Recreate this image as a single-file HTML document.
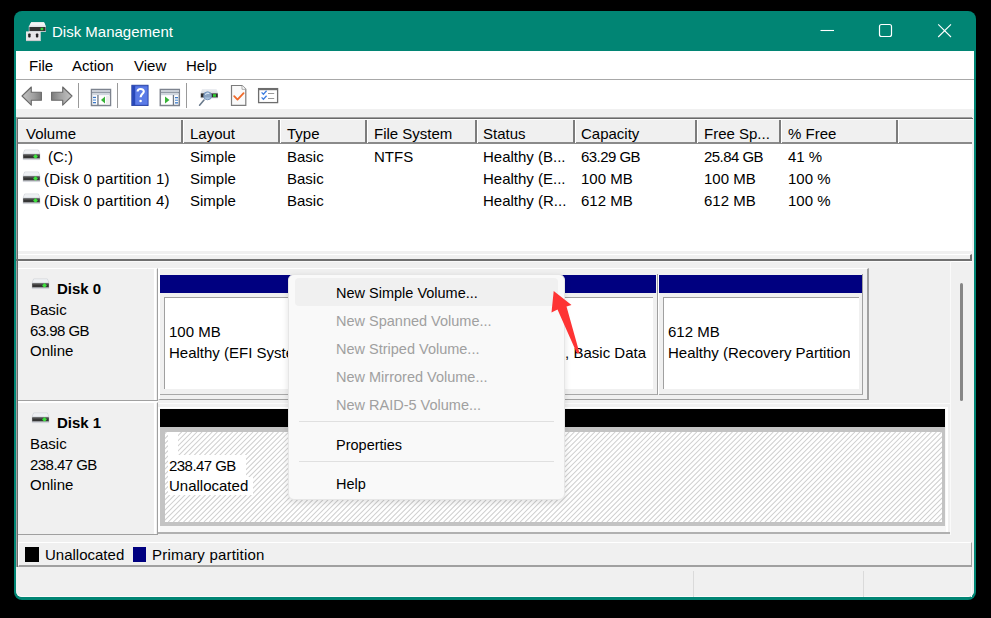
<!DOCTYPE html>
<html><head><meta charset="utf-8">
<style>
*{margin:0;padding:0;box-sizing:border-box}
html,body{width:991px;height:618px;background:#000;overflow:hidden}
body{position:relative;font-family:"Liberation Sans",sans-serif;font-size:15px;color:#000}
.a{position:absolute}
.t{position:absolute;white-space:nowrap;line-height:18px}
#win{left:14px;top:11px;width:962px;height:589px;background:#018574;border-radius:8px;overflow:hidden}
#inner{left:16px;top:51px;width:958px;height:546px;background:#f0f0f0;border-radius:0 0 6px 6px;box-shadow:inset 0 -1px 0 #fbfbfb}
.hatch{background:repeating-linear-gradient(-45deg,#fff 0,#fff 2.2px,#c0c0c0 2.2px,#c0c0c0 3.67px)}
</style></head>
<body>

<svg width="0" height="0" style="position:absolute"><defs>
<linearGradient id="silv" x1="0" y1="0" x2="0" y2="1"><stop offset="0" stop-color="#eceef2"/><stop offset="1" stop-color="#c9ccd2"/></linearGradient>
<linearGradient id="arrg" x1="0" y1="0" x2="1" y2="0"><stop offset="0" stop-color="#c4c4c4"/><stop offset="0.6" stop-color="#a0a0a0"/><stop offset="1" stop-color="#7c7c7c"/></linearGradient><linearGradient id="arrg2" x1="1" y1="0" x2="0" y2="0"><stop offset="0" stop-color="#c4c4c4"/><stop offset="0.6" stop-color="#a0a0a0"/><stop offset="1" stop-color="#7c7c7c"/></linearGradient>
<symbol id="drv" viewBox="0 0 20 14">
<path d="M2.6 1 H16.4 L17.8 5 V10.6 H1.2 V5 Z" fill="#dfe2e7" stroke="#c3c7ce" stroke-width="0.6"/>
<path d="M2.8 1.3 H16.2 L17.2 4 H1.8 Z" fill="#eef0f3"/>
<rect x="1.2" y="5.4" width="16.6" height="4.2" fill="#353535"/>
<rect x="1.6" y="5.7" width="15.8" height="0.9" fill="#5a5a5a"/>
<path d="M13.5 5 L14.7 6.3 L15.9 7.5 L14.7 8.8 L13.5 9.9 L12.3 8.8 L11.1 7.5 L12.3 6.3 Z" fill="#3ce03c"/>
<rect x="1.2" y="9.6" width="16.6" height="1" fill="#cfd3d9"/>
</symbol>
</defs></svg>
<div id="win" class="a"></div>
<div id="inner" class="a"></div>

<!-- title icon -->
<svg class="a" style="left:24px;top:20px" width="24" height="24" viewBox="0 0 24 24">
<path d="M7.2 2.3 H20 L22 6.5 V11.5 H4.8 V6.5 Z" fill="#e3e4e8"/>
<path d="M7.2 2.3 H20 L21.5 5.5 H5.5 Z" fill="#f4f4f6"/>
<rect x="5.4" y="7" width="16.2" height="4.2" fill="#333"/>
<rect x="16.6" y="7.8" width="2.6" height="2.4" fill="#35d035"/>
<rect x="4.8" y="11.2" width="17" height="0.8" fill="#cfd3d8"/>
<rect x="2" y="11.4" width="14.7" height="9.6" fill="#e6e6e8"/>
<rect x="2" y="20.2" width="14.7" height="0.9" fill="#c4c4c6"/>
<rect x="4.2" y="13.4" width="2.4" height="4.2" rx="0.8" fill="#222"/>
<rect x="11.9" y="13.4" width="2.4" height="4.2" rx="0.8" fill="#222"/>
</svg>
<!-- window buttons -->
<svg class="a" style="left:810px;top:15px" width="160" height="30">
<line x1="820.5" y1="15.5" x2="834" y2="15.5" stroke="#fff" stroke-width="1.1" transform="translate(-810,0)"/>
<rect x="69.5" y="9.5" width="12" height="12" rx="2" fill="none" stroke="#fff" stroke-width="1.2"/>
<path d="M128.2 9.3 L141 22 M141 9.3 L128.2 22" stroke="#fff" stroke-width="1.1"/>
</svg>

<!-- title -->
<div class="t" style="left:52px;top:23px;color:#fff">Disk Management</div>
<!-- menu -->
<div class="a" style="left:16px;top:51px;width:958px;height:28px;background:#fff"></div>
<div class="a" style="left:16px;top:79px;width:958px;height:1px;background:#a8a8a8"></div>
<div class="a" style="left:16px;top:80px;width:958px;height:29px;background:#fff"></div>
<!-- toolbar -->
<svg class="a" style="left:16px;top:80px" width="300" height="29" viewBox="16 80 300 29">
<path d="M22 96 L31.3 87 V92.2 H41.4 V100.2 H31.3 V105.2 Z" fill="url(#arrg)" stroke="#6a6a6a" stroke-width="1.1" stroke-linejoin="round"/>
<path d="M72 96 L62.7 87 V92.2 H51.6 V100.2 H62.7 V105.2 Z" fill="url(#arrg2)" stroke="#6a6a6a" stroke-width="1.1" stroke-linejoin="round"/>
<rect x="78" y="83" width="1" height="25" fill="#9a9a9a"/>
<rect x="117" y="83" width="1" height="25" fill="#9a9a9a"/>
<rect x="186" y="83" width="1" height="25" fill="#9a9a9a"/>
<!-- icon3 -->
<rect x="91.5" y="89.5" width="19" height="16" fill="#fff" stroke="#7d838e" stroke-width="1.5"/>
<rect x="92" y="90" width="18" height="2.3" fill="#c9ced6"/>
<rect x="92" y="92.3" width="18" height="1" fill="#6d7785"/>
<rect x="92" y="93.4" width="18" height="1.8" fill="#cfd6df"/>
<rect x="97.3" y="95" width="1.3" height="10" fill="#6d7785"/>
<rect x="93" y="96.8" width="3" height="1.3" fill="#3a78c8"/>
<rect x="93" y="99.4" width="3" height="1.3" fill="#6aa0dd"/>
<rect x="93" y="102" width="3" height="1.3" fill="#3a78c8"/>
<rect x="106" y="96" width="4" height="8.5" fill="#eee"/>
<path d="M101 100 L105 96.6 V103.4 Z" fill="#37b337"/>
<!-- help book -->
<rect x="131.8" y="85.2" width="16.3" height="20.4" fill="#4666d8" stroke="#203a9a" stroke-width="0.8"/>
<rect x="132.2" y="85.6" width="3" height="19.6" fill="#2848b8"/>
<rect x="135.4" y="86.5" width="12" height="18" fill="#5b7be6"/>
<path d="M137.6 91.4 C137.6 88.4 143.8 88.2 143.8 91.4 C143.8 93.6 140.6 94 140.6 97.2" fill="none" stroke="#fff" stroke-width="2.1"/>
<circle cx="140.6" cy="101" r="1.3" fill="#fff"/>
<!-- icon5 -->
<rect x="160.3" y="89.5" width="19" height="16" fill="#fff" stroke="#7d838e" stroke-width="1.5"/>
<rect x="161" y="90" width="18" height="2.3" fill="#c9ced6"/>
<rect x="161" y="92.3" width="18" height="1" fill="#6d7785"/>
<rect x="161" y="93.4" width="18" height="1.8" fill="#cfd6df"/>
<rect x="172.8" y="95" width="1.3" height="10" fill="#6d7785"/>
<rect x="175" y="97" width="3" height="1.3" fill="#3a78c8"/>
<rect x="175" y="99.6" width="3" height="1.3" fill="#6aa0dd"/>
<rect x="175" y="102.2" width="3" height="1.3" fill="#3a78c8"/>
<path d="M169.5 100 L165 96.6 V103.4 Z" fill="#37b337"/>
<!-- icon7 rescan -->
<path d="M202 89 H216.5 L217.8 92.5 V98 H200.8 V92.5 Z" fill="url(#silv)"/>
<rect x="200.8" y="93.4" width="17" height="4.2" fill="#2e2e2e"/>
<rect x="213" y="94.2" width="3" height="2.6" fill="#30d030"/>
<rect x="200.8" y="97.6" width="17" height="0.8" fill="#d6d9de"/>
<line x1="204" y1="100" x2="199.6" y2="105.2" stroke="#6a7a8c" stroke-width="1.6" stroke-linecap="round"/>
<circle cx="207.6" cy="95.8" r="4" fill="#9ab8dc" fill-opacity="0.85" stroke="#7090b8" stroke-width="0.9"/>
<path d="M205.2 94.6 Q207 92.8 209.2 93.4" stroke="#e8f0fa" stroke-width="0.9" fill="none"/>
<!-- icon8 document check -->
<path d="M231.5 85.5 H242 L245.8 89.3 V105.3 H231.5 Z" fill="#fafafa" stroke="#7c7c7c" stroke-width="1.2"/>
<path d="M242 85.5 V89.3 H245.8" fill="#fff" stroke="#9a9a9a" stroke-width="0.8"/>
<path d="M234.2 96.2 L237.5 99.6 L243.6 93.2" fill="none" stroke="#f06a2a" stroke-width="1.8" stroke-linecap="round" stroke-linejoin="round"/>
<!-- icon9 checklist -->
<rect x="258.6" y="88.6" width="19" height="14" fill="#fff" stroke="#6e6e6e" stroke-width="1.3"/>
<rect x="258.6" y="88.4" width="19" height="1.8" fill="#6e6e6e"/>
<path d="M261.6 92.4 L263.4 94.2 L266.6 90.8" fill="none" stroke="#3f7fe0" stroke-width="1.3"/>
<path d="M261.6 97.4 L263.4 99.2 L266.6 95.8" fill="none" stroke="#3f7fe0" stroke-width="1.3"/>
<rect x="268" y="93" width="6.2" height="1" fill="#9a9a9a"/>
<rect x="268" y="98" width="6.2" height="1" fill="#9a9a9a"/>
</svg>
<div class="t" style="left:29px;top:57px">File</div>
<div class="t" style="left:72px;top:57px">Action</div>
<div class="t" style="left:134px;top:57px">View</div>
<div class="t" style="left:186px;top:57px">Help</div>

<!-- list view -->
<div class="a" style="left:16px;top:117px;width:956px;height:145px;background:#fff;border-top:1px solid #a0a0a0;border-left:1px solid #a0a0a0"></div>
<div class="a" style="left:17px;top:118px;width:956px;height:1px;background:#696969"></div>
<div class="a" style="left:17px;top:118px;width:1px;height:143px;background:#696969"></div>
<!-- header -->
<div class="a" style="left:18px;top:119px;width:954px;height:25px;background:#f0f0f0;border-top:1px solid #fdfdfd"></div>
<div class="a" style="left:18px;top:142px;width:954px;height:2px;background:#8a8a8a"></div>
<div class="a" style="left:181px;top:120px;width:2px;height:23px;background:#7c7c7c"></div>
<div class="a" style="left:183px;top:120px;width:1px;height:23px;background:#fff"></div>
<div class="a" style="left:278px;top:120px;width:2px;height:23px;background:#7c7c7c"></div>
<div class="a" style="left:280px;top:120px;width:1px;height:23px;background:#fff"></div>
<div class="a" style="left:365px;top:120px;width:2px;height:23px;background:#7c7c7c"></div>
<div class="a" style="left:367px;top:120px;width:1px;height:23px;background:#fff"></div>
<div class="a" style="left:475px;top:120px;width:2px;height:23px;background:#7c7c7c"></div>
<div class="a" style="left:477px;top:120px;width:1px;height:23px;background:#fff"></div>
<div class="a" style="left:573px;top:120px;width:2px;height:23px;background:#7c7c7c"></div>
<div class="a" style="left:575px;top:120px;width:1px;height:23px;background:#fff"></div>
<div class="a" style="left:695px;top:120px;width:2px;height:23px;background:#7c7c7c"></div>
<div class="a" style="left:697px;top:120px;width:1px;height:23px;background:#fff"></div>
<div class="a" style="left:779px;top:120px;width:2px;height:23px;background:#7c7c7c"></div>
<div class="a" style="left:781px;top:120px;width:1px;height:23px;background:#fff"></div>
<div class="a" style="left:896px;top:120px;width:2px;height:23px;background:#7c7c7c"></div>
<div class="a" style="left:898px;top:120px;width:1px;height:23px;background:#fff"></div>

<div class="t" style="left:26px;top:125px">Volume</div>
<div class="t" style="left:190px;top:125px">Layout</div>
<div class="t" style="left:287px;top:125px">Type</div>
<div class="t" style="left:374px;top:125px">File System</div>
<div class="t" style="left:483px;top:125px">Status</div>
<div class="t" style="left:581px;top:125px">Capacity</div>
<div class="t" style="left:704px;top:125px">Free Sp...</div>
<div class="t" style="left:788px;top:125px">% Free</div>
<svg class="a" style="left:22px;top:149px" width="20" height="14"><use href="#drv"/></svg>
<div class="t" style="left:48px;top:148px">(C:)</div>
<div class="t" style="left:190px;top:148px">Simple</div>
<div class="t" style="left:287px;top:148px">Basic</div>
<div class="t" style="left:374px;top:148px">NTFS</div>
<div class="t" style="left:483px;top:148px">Healthy (B...</div>
<div class="t" style="left:581px;top:148px;letter-spacing:-0.55px">63.29 GB</div>
<div class="t" style="left:704px;top:148px;letter-spacing:-0.55px">25.84 GB</div>
<div class="t" style="left:788px;top:148px">41 %</div>
<svg class="a" style="left:22px;top:171px" width="20" height="14"><use href="#drv"/></svg>
<div class="t" style="left:44px;top:170px;letter-spacing:0.2px">(Disk 0 partition 1)</div>
<div class="t" style="left:190px;top:170px">Simple</div>
<div class="t" style="left:287px;top:170px">Basic</div>
<div class="t" style="left:483px;top:170px">Healthy (E...</div>
<div class="t" style="left:581px;top:170px">100 MB</div>
<div class="t" style="left:704px;top:170px">100 MB</div>
<div class="t" style="left:788px;top:170px">100 %</div>
<svg class="a" style="left:22px;top:193px" width="20" height="14"><use href="#drv"/></svg>
<div class="t" style="left:44px;top:192px;letter-spacing:0.2px">(Disk 0 partition 4)</div>
<div class="t" style="left:190px;top:192px">Simple</div>
<div class="t" style="left:287px;top:192px">Basic</div>
<div class="t" style="left:483px;top:192px">Healthy (R...</div>
<div class="t" style="left:581px;top:192px">612 MB</div>
<div class="t" style="left:704px;top:192px">612 MB</div>
<div class="t" style="left:788px;top:192px">100 %</div>

<!-- bottom strip of list -->
<div class="a" style="left:18px;top:251px;width:954px;height:8px;background:#f0f0f0"></div><div class="a" style="left:18px;top:254px;width:954px;height:7px;border-top:1px solid #fff;border-right:2px solid #6e6e6e;border-bottom:2px solid #6e6e6e"></div>
<div class="a" style="left:16px;top:259px;width:956px;height:2px;background:#707070"></div><div class="a" style="left:18px;top:261px;width:932px;height:1px;background:#fafafa"></div>

<!-- graphical view -->
<div class="a" style="left:16px;top:261px;width:2px;height:274px;background:#a0a0a0"></div>
<div class="a" style="left:17px;top:261px;width:1px;height:274px;background:#696969"></div>
<div class="a" style="left:950px;top:261px;width:1px;height:274px;background:#fafafa"></div>
<div class="a thumb" style="left:960px;top:283px;width:3px;height:118px;background:#868686;border-radius:2px"></div>

<!-- disk0 label -->
<div class="a" style="left:18px;top:268px;width:140px;height:133px;border-top:1px solid #fff;border-right:1px solid #a0a0a0;border-bottom:1px solid #a0a0a0"></div>
<div class="a" style="left:154px;top:268px;width:2px;height:132px;background:#fff"></div>
<div class="a" style="left:18px;top:401px;width:140px;height:1px;background:#fff"></div>
<svg class="a" style="left:31px;top:278px" width="20" height="14"><use href="#drv"/></svg>
<div class="t" style="left:57px;top:280px;font-weight:bold">Disk 0</div>
<div class="t" style="left:30px;top:301px">Basic</div>
<div class="t" style="left:30px;top:322px;letter-spacing:-0.55px">63.98 GB</div>
<div class="t" style="left:30px;top:342px">Online</div>

<!-- disk0 partitions container -->
<div class="a" style="left:158px;top:268px;width:711px;height:132px;border-top:1px solid #fff;border-left:2px solid #fff;border-right:2px solid #a0a0a0;border-bottom:1px solid #a0a0a0"></div>
<div class="a" style="left:160px;top:275px;width:203px;height:18px;background:#000080"></div>
<div class="a" style="left:364px;top:274px;width:1px;height:121px;background:#a0a0a0"></div>
<div class="a" style="left:160px;top:394px;width:204px;height:1px;background:#a8a8a8"></div>
<div class="a" style="left:164px;top:297px;width:196px;height:92px;background:#fff;border-top:1px solid #a0a0a0;border-left:1px solid #a0a0a0"></div>
<div class="a" style="left:159px;top:275px;width:1px;height:119px;background:#fff"></div>
<div class="a" style="left:366px;top:275px;width:290px;height:18px;background:#000080"></div>
<div class="a" style="left:657px;top:274px;width:1px;height:121px;background:#a0a0a0"></div>
<div class="a" style="left:366px;top:394px;width:291px;height:1px;background:#a8a8a8"></div>
<div class="a" style="left:370px;top:297px;width:283px;height:92px;background:#fff;border-top:1px solid #a0a0a0;border-left:1px solid #a0a0a0"></div>
<div class="a" style="left:365px;top:275px;width:1px;height:119px;background:#fff"></div>
<div class="a" style="left:659px;top:275px;width:203px;height:18px;background:#000080"></div>
<div class="a" style="left:862px;top:274px;width:1px;height:121px;background:#a0a0a0"></div>
<div class="a" style="left:659px;top:394px;width:204px;height:1px;background:#a8a8a8"></div>
<div class="a" style="left:663px;top:297px;width:196px;height:92px;background:#fff;border-top:1px solid #a0a0a0;border-left:1px solid #a0a0a0"></div>
<div class="a" style="left:658px;top:275px;width:1px;height:119px;background:#fff"></div>
<div class="t" style="left:169px;top:323px">100 MB</div>
<div class="t" style="left:169px;top:344px">Healthy (EFI System Partition)</div>
<div class="a" style="left:288px;top:330px;width:80px;height:40px;background:transparent"></div>
<div class="t" style="left:372px;top:323px">63.29 GB NTFS</div>
<div class="a" style="left:366px;top:344px;width:285px;height:20px;overflow:hidden"><div class="t" style="right:5px;top:0">Dump, Basic Data</div></div>
<div class="t" style="left:668px;top:323px">612 MB</div>
<div class="a" style="left:668px;top:344px;width:182px;height:20px;overflow:hidden"><div class="t" style="left:0;top:0">Healthy (Recovery Partition)</div></div>

<!-- disk1 label -->
<div class="a" style="left:18px;top:402px;width:140px;height:133px;border-top:1px solid #fff;border-right:1px solid #a0a0a0;border-bottom:1px solid #a0a0a0"></div>
<div class="a" style="left:154px;top:402px;width:2px;height:132px;background:#fff"></div>
<svg class="a" style="left:31px;top:412px" width="20" height="14"><use href="#drv"/></svg>
<div class="t" style="left:57px;top:414px;font-weight:bold">Disk 1</div>
<div class="t" style="left:30px;top:435px">Basic</div>
<div class="t" style="left:30px;top:456px;letter-spacing:-0.55px">238.47 GB</div>
<div class="t" style="left:30px;top:476px">Online</div>

<!-- disk1 partitions -->
<div class="a" style="left:158px;top:407px;width:790px;height:127px;border-top:1px solid #fff;border-left:2px solid #fff;border-right:2px solid #fff;background:#f7f7f7"></div>
<div class="a" style="left:158px;top:532px;width:792px;height:2px;background:#b0b0b0"></div>
<div class="a" style="left:158px;top:403px;width:792px;height:1px;background:#fafafa"></div>
<div class="a" style="left:160px;top:409px;width:785px;height:18px;background:#000"></div>
<div class="a" style="left:160px;top:427px;width:785px;height:99px;background:#c3c3c3"></div>
<svg class="a" style="left:165px;top:432px;background:#fff" width="777" height="90"><path d="M-98.80 90L-8.80 0M-93.70 90L-3.70 0M-88.60 90L1.40 0M-83.50 90L6.50 0M-78.40 90L11.60 0M-73.30 90L16.70 0M-68.20 90L21.80 0M-63.10 90L26.90 0M-58.00 90L32.00 0M-52.90 90L37.10 0M-47.80 90L42.20 0M-42.70 90L47.30 0M-37.60 90L52.40 0M-32.50 90L57.50 0M-27.40 90L62.60 0M-22.30 90L67.70 0M-17.20 90L72.80 0M-12.10 90L77.90 0M-7.00 90L83.00 0M-1.90 90L88.10 0M3.20 90L93.20 0M8.30 90L98.30 0M13.40 90L103.40 0M18.50 90L108.50 0M23.60 90L113.60 0M28.70 90L118.70 0M33.80 90L123.80 0M38.90 90L128.90 0M44.00 90L134.00 0M49.10 90L139.10 0M54.20 90L144.20 0M59.30 90L149.30 0M64.40 90L154.40 0M69.50 90L159.50 0M74.60 90L164.60 0M79.70 90L169.70 0M84.80 90L174.80 0M89.90 90L179.90 0M95.00 90L185.00 0M100.10 90L190.10 0M105.20 90L195.20 0M110.30 90L200.30 0M115.40 90L205.40 0M120.50 90L210.50 0M125.60 90L215.60 0M130.70 90L220.70 0M135.80 90L225.80 0M140.90 90L230.90 0M146.00 90L236.00 0M151.10 90L241.10 0M156.20 90L246.20 0M161.30 90L251.30 0M166.40 90L256.40 0M171.50 90L261.50 0M176.60 90L266.60 0M181.70 90L271.70 0M186.80 90L276.80 0M191.90 90L281.90 0M197.00 90L287.00 0M202.10 90L292.10 0M207.20 90L297.20 0M212.30 90L302.30 0M217.40 90L307.40 0M222.50 90L312.50 0M227.60 90L317.60 0M232.70 90L322.70 0M237.80 90L327.80 0M242.90 90L332.90 0M248.00 90L338.00 0M253.10 90L343.10 0M258.20 90L348.20 0M263.30 90L353.30 0M268.40 90L358.40 0M273.50 90L363.50 0M278.60 90L368.60 0M283.70 90L373.70 0M288.80 90L378.80 0M293.90 90L383.90 0M299.00 90L389.00 0M304.10 90L394.10 0M309.20 90L399.20 0M314.30 90L404.30 0M319.40 90L409.40 0M324.50 90L414.50 0M329.60 90L419.60 0M334.70 90L424.70 0M339.80 90L429.80 0M344.90 90L434.90 0M350.00 90L440.00 0M355.10 90L445.10 0M360.20 90L450.20 0M365.30 90L455.30 0M370.40 90L460.40 0M375.50 90L465.50 0M380.60 90L470.60 0M385.70 90L475.70 0M390.80 90L480.80 0M395.90 90L485.90 0M401.00 90L491.00 0M406.10 90L496.10 0M411.20 90L501.20 0M416.30 90L506.30 0M421.40 90L511.40 0M426.50 90L516.50 0M431.60 90L521.60 0M436.70 90L526.70 0M441.80 90L531.80 0M446.90 90L536.90 0M452.00 90L542.00 0M457.10 90L547.10 0M462.20 90L552.20 0M467.30 90L557.30 0M472.40 90L562.40 0M477.50 90L567.50 0M482.60 90L572.60 0M487.70 90L577.70 0M492.80 90L582.80 0M497.90 90L587.90 0M503.00 90L593.00 0M508.10 90L598.10 0M513.20 90L603.20 0M518.30 90L608.30 0M523.40 90L613.40 0M528.50 90L618.50 0M533.60 90L623.60 0M538.70 90L628.70 0M543.80 90L633.80 0M548.90 90L638.90 0M554.00 90L644.00 0M559.10 90L649.10 0M564.20 90L654.20 0M569.30 90L659.30 0M574.40 90L664.40 0M579.50 90L669.50 0M584.60 90L674.60 0M589.70 90L679.70 0M594.80 90L684.80 0M599.90 90L689.90 0M605.00 90L695.00 0M610.10 90L700.10 0M615.20 90L705.20 0M620.30 90L710.30 0M625.40 90L715.40 0M630.50 90L720.50 0M635.60 90L725.60 0M640.70 90L730.70 0M645.80 90L735.80 0M650.90 90L740.90 0M656.00 90L746.00 0M661.10 90L751.10 0M666.20 90L756.20 0M671.30 90L761.30 0M676.40 90L766.40 0M681.50 90L771.50 0M686.60 90L776.60 0M691.70 90L781.70 0M696.80 90L786.80 0M701.90 90L791.90 0M707.00 90L797.00 0M712.10 90L802.10 0M717.20 90L807.20 0M722.30 90L812.30 0M727.40 90L817.40 0M732.50 90L822.50 0M737.60 90L827.60 0M742.70 90L832.70 0M747.80 90L837.80 0M752.90 90L842.90 0M758.00 90L848.00 0M763.10 90L853.10 0M768.20 90L858.20 0M773.30 90L863.30 0M778.40 90L868.40 0" stroke="#cfcfcf" stroke-width="1.05" fill="none"/></svg>
<div class="a" style="left:168px;top:432px;width:10px;height:23px;background:#fff"></div>
<div class="a" style="left:168px;top:455px;width:78px;height:22px;background:#fff"></div>
<div class="a" style="left:168px;top:477px;width:85px;height:18px;background:#fff"></div>
<div class="t" style="left:169px;top:457px;letter-spacing:-0.55px">238.47 GB</div>
<div class="t" style="left:169px;top:477px">Unallocated</div>

<!-- legend -->
<div class="a" style="left:18px;top:542px;width:954px;height:25px;border-top:1px solid #fff;border-left:1px solid #fff;border-right:1px solid #a0a0a0;border-bottom:2px solid #a0a0a0"></div>
<div class="a" style="left:16px;top:535px;width:1px;height:32px;background:#a0a0a0"></div><div class="a" style="left:17px;top:535px;width:1px;height:32px;background:#696969"></div>
<div class="a" style="left:971px;top:570px;width:1px;height:27px;background:#fafafa"></div>
<div class="a" style="left:25px;top:547px;width:14px;height:15px;background:#000"></div>
<div class="t" style="left:45px;top:546px">Unallocated</div>
<div class="a" style="left:133px;top:547px;width:13px;height:15px;background:#000080"></div>
<div class="t" style="left:152px;top:546px;letter-spacing:0.2px">Primary partition</div>
<!-- status bar -->
<div class="a" style="left:863px;top:571px;width:1px;height:26px;background:#dadada"></div><div class="a" style="left:693px;top:571px;width:1px;height:26px;background:#dadada"></div>

<!-- context menu -->
<div class="a" style="left:288px;top:274px;width:277px;height:226px;background:#f9f9f9;border:1px solid #e6e6e6;border-radius:6px;box-shadow:0 2px 6px rgba(0,0,0,0.12)"></div>
<div class="a" style="left:295px;top:278px;width:263px;height:28px;background:#f0f0f0;border-radius:4px"></div>
<div class="t" style="left:336px;top:284px;font-size:14.5px">New Simple Volume...</div>
<div class="t" style="left:336px;top:312px;font-size:14.5px;color:#a0a0a0">New Spanned Volume...</div>
<div class="t" style="left:336px;top:340px;font-size:14.5px;color:#a0a0a0">New Striped Volume...</div>
<div class="t" style="left:336px;top:368px;font-size:14.5px;color:#a0a0a0">New Mirrored Volume...</div>
<div class="t" style="left:336px;top:396px;font-size:14.5px;color:#a0a0a0">New RAID-5 Volume...</div>
<div class="a" style="left:299px;top:421px;width:255px;height:1px;background:#e0e0e0"></div>
<div class="t" style="left:336px;top:436px;font-size:14.5px">Properties</div>
<div class="a" style="left:299px;top:461px;width:255px;height:1px;background:#e0e0e0"></div>
<div class="t" style="left:336px;top:475px;font-size:14.5px">Help</div>
<!-- red arrow -->
<svg class="a" style="left:0;top:0" width="991" height="618"><polygon points="553.7,291 551.5,312.5 557.5,309.5 577,353.5 579.5,353 566.5,306.5 571.5,305" fill="#fe3434"/></svg>
</body></html>
